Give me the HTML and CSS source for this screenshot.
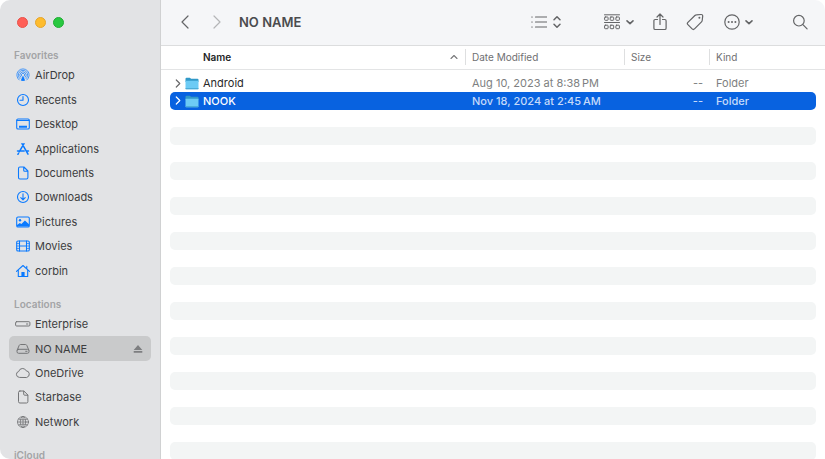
FILE: index.html
```html
<!DOCTYPE html>
<html lang="en">
<head>
<meta charset="utf-8">
<title>NO NAME</title>
<link rel="stylesheet" href="styles.css">
</head>
<body>
<svg class="defs" aria-hidden="true">
  <symbol id="doc" viewBox="0 0 16 16"><path d="M4.900 2h4l4 4v6.600a1.400 1.400 0 0 1-1.400 1.400H4.900a1.400 1.400 0 0 1-1.400-1.400V3.400A1.400 1.400 0 0 1 4.900 2zM8.700 2.200v3a1 1 0 0 0 1 1h3"/></symbol>
  <symbol id="down" viewBox="0 0 10 10"><path d="M2 3.900 5 6.700l3-2.800"/></symbol>
  <symbol id="folder" viewBox="0 0 14 13">
    <path fill="#3199c8" d="M.500 1.700A1 1 0 0 1 1.500.700h3.300l1.300 1.100h6.400a1 1 0 0 1 1 1V5H.500z"/>
    <path fill="#6ccbf5" d="M.500 3.700h13v7.600a.900.900 0 0 1-.900.900H1.400a.900.900 0 0 1-.900-.900z"/>
    <path fill="#4badd9" d="M.500 11.100h13v.300a.900.900 0 0 1-.900.900H1.400a.900.900 0 0 1-.900-.900z"/>
  </symbol>
</svg>
<div class="window">
  <aside class="sidebar">
    <div class="lights">
      <button class="light close" aria-label="Close"></button>
      <button class="light minimize" aria-label="Minimize"></button>
      <button class="light zoom" aria-label="Zoom"></button>
    </div>
    <nav>
      <h2>Favorites</h2>
      <ul class="places favorites">
        <li><a href="#"><svg class="icon" viewBox="0 0 16 16"><g stroke-width=".7"><path d="M4.200 13a6.200 6.200 0 1 1 7.600 0"/><path d="M4.900 11.600a4.700 4.700 0 1 1 6.200 0"/><path d="M5.700 10.300a3.200 3.200 0 1 1 4.600 0"/><path d="M6.700 9.100a1.700 1.700 0 1 1 2.600 0"/></g><path class="solid" d="m8 8.500 2.200 5.100a6 6 0 0 1-4.400 0z"/></svg>AirDrop</a></li>
        <li><a href="#"><svg class="icon" viewBox="0 0 16 16"><circle cx="8" cy="8" r="5.500"/><path d="M8 4.500V8.200H5"/></svg>Recents</a></li>
        <li><a href="#"><svg class="icon" viewBox="0 0 16 16"><rect x="1.700" y="3" width="12.600" height="10" rx="1.300"/><path d="M2 4.500h12"/><path class="solid" d="M4 9.700h8v2H4z"/></svg>Desktop</a></li>
        <li><a href="#"><svg class="icon" viewBox="0 0 16 16"><g stroke-width="1.500"><path d="m9 2.700-4.800 8.200M7 2.700l6 10.500M2.500 10.100h6.700M11.400 10.100h2.100M3.500 12.300l-.600 1"/></g></svg>Applications</a></li>
        <li><a href="#"><svg class="icon"><use href="#doc"/></svg>Documents</a></li>
        <li><a href="#"><svg class="icon" viewBox="0 0 16 16"><circle cx="8" cy="8" r="5.500"/><path d="M8 4.800v6M5.800 8.700 8 10.900l2.200-2.200"/></svg>Downloads</a></li>
        <li><a href="#"><svg class="icon" viewBox="0 0 16 16"><rect x="1.700" y="3" width="12.600" height="10" rx="1.300"/><circle class="solid" cx="5" cy="6.200" r="1.200"/><path class="solid" d="M2 12.500v-1.600l2.800-2 1.600 1.200 3.500-3.600 4.100 3.800v2.200z"/></svg>Pictures</a></li>
        <li><a href="#"><svg class="icon" viewBox="0 0 16 16"><rect x="1.700" y="3" width="12.600" height="10" rx="1.300"/><path d="M4.500 3v10M11.500 3v10M4.500 8h7"/><g stroke-width=".7"><path d="M2 5.500h2.500M2 8h2.500M2 10.500h2.500M11.500 5.500H14M11.500 8H14M11.500 10.500H14"/></g></svg>Movies</a></li>
        <li><a href="#"><svg class="icon" viewBox="0 0 16 16"><path d="M1.500 8.300 8 2.500l6.500 5.800M3.300 7v6.500h9.400V7M11.800 5.500V3.200"/><path class="solid" d="M6.400 9h3.200v4.800H6.400z"/></svg>corbin</a></li>
      </ul>
      <h2>Locations</h2>
      <ul class="places locations">
        <li><a href="#"><svg class="icon" viewBox="0 0 16 16"><rect x=".6" y="5.700" width="14.300" height="4.300" rx="1"/><path d="M11.500 8h1.300"/></svg>Enterprise</a></li>
        <li class="current"><a href="#"><svg class="icon" viewBox="0 0 16 16"><path d="m2.200 9 2-4.600c.300-.600.700-.900 1.300-.900h5c.600 0 1 .300 1.300.900l2 4.600"/><rect x="2" y="8.300" width="12" height="4" rx="1.600"/><path d="M10.700 10.300h1.300"/></svg>NO NAME</a><button class="eject" aria-label="Eject"><svg viewBox="0 0 10 10"><path d="M5 1 9.300 6H.700zM.700 7.100h8.600v1.700H.700z"/></svg></button></li>
        <li><a href="#"><svg class="icon" viewBox="0 0 16 16"><path d="M4.200 12.400a3 3 0 0 1-.500-5.900 4 4 0 0 1 7.500-.700 3.400 3.400 0 0 1 .800 6.600z"/></svg>OneDrive</a></li>
        <li><a href="#"><svg class="icon"><use href="#doc"/></svg>Starbase</a></li>
        <li><a href="#"><svg class="icon" viewBox="0 0 16 16"><g stroke-width=".8"><circle cx="8" cy="8" r="5.500"/><ellipse cx="8" cy="8" rx="2.700" ry="5.500"/><path d="M8 2.500v11M2.500 8h11M3.500 5c2.500 1.200 6.500 1.200 9 0M3.500 11c2.500-1.200 6.500-1.200 9 0"/></g></svg>Network</a></li>
      </ul>
      <h2>iCloud</h2>
    </nav>
  </aside>
  <main class="content">
    <header class="toolbar">
      <button aria-label="Back"><svg class="i16" viewBox="0 0 16 16"><path d="M11 2 5 8l6 6"/></svg></button>
      <button class="forward" aria-label="Forward" disabled><svg class="i16" viewBox="0 0 16 16"><path d="m5 2 6 6-6 6"/></svg></button>
      <h1>NO NAME</h1>
      <div class="tools">
        <button class="view" aria-label="View as list"><svg class="i16" viewBox="0 0 16 16"><path d="M4.500 3h11M4.500 8h11M4.500 13h11M.800 3h.400M.800 8h.400M.800 13h.400"/></svg><svg class="i10" viewBox="0 0 10 14"><g stroke-width="1.500"><path d="m2 4.700 3-3 3 3M2 9.300l3 3 3-3"/></g></svg></button>
        <button class="group" aria-label="Group items"><svg class="i16" viewBox="0 0 16 16"><g stroke-width="1"><path d="M.500.800h15M.500 8.500h15"/><rect x=".6" y="3" width="3.500" height="3.300" rx=".7"/><rect x="6.200" y="3" width="3.500" height="3.300" rx=".7"/><rect x="11.900" y="3" width="3.500" height="3.300" rx=".7"/><rect x=".6" y="11.200" width="3.500" height="3.500" rx=".7"/><rect x="6.200" y="11.200" width="3.500" height="3.500" rx=".7"/><rect x="11.900" y="11.200" width="3.500" height="3.500" rx=".7"/></g></svg><svg class="i10 bold"><use href="#down"/></svg></button>
        <button aria-label="Share"><svg class="i18" viewBox="0 0 18 18"><path d="M6.500 6.500H4.200a1.300 1.300 0 0 0-1.300 1.300v7.400a1.300 1.300 0 0 0 1.300 1.300h9.600a1.300 1.300 0 0 0 1.300-1.300V7.800a1.300 1.300 0 0 0-1.300-1.300h-2.300M9 11.500V1.200M6 4l3-3 3 3"/></svg></button>
        <button class="tag" aria-label="Edit tags"><svg class="i18" viewBox="0 0 18 18"><path d="M10.300 1.900 15 1.500c1.100-.100 1.800.600 1.700 1.600l-.500 4.400c-.100.600-.300 1-.700 1.400l-7 7c-.800.800-1.600.800-2.400 0L1.900 11.700c-.800-.800-.800-1.600 0-2.400l7-6.800c.400-.400.800-.600 1.400-.600z"/><circle class="solid" cx="13.400" cy="4.800" r="1"/></svg></button>
        <button class="more" aria-label="More actions"><svg class="i16" viewBox="0 0 16 16"><circle cx="8" cy="8" r="7.200"/><g class="solid"><circle cx="4.600" cy="8" r="1"/><circle cx="8" cy="8" r="1"/><circle cx="11.400" cy="8" r="1"/></g></svg><svg class="i10 bold"><use href="#down"/></svg></button>
        <button class="search" aria-label="Search"><svg class="i16" viewBox="0 0 16 16"><circle cx="6.900" cy="6.700" r="5.300"/><path d="m10.900 10.700 4.200 4.200"/></svg></button>
      </div>
    </header>
    <div class="listing">
      <table>
        <colgroup><col><col class="c-date"><col class="c-size"><col class="c-kind"></colgroup>
        <thead><tr>
          <th class="sorted" scope="col" aria-sort="ascending"><div>Name<svg class="i10" viewBox="0 0 10 10"><path d="m2 6.500 3-3 3 3"/></svg></div></th>
          <th scope="col"><div>Date Modified</div></th>
          <th scope="col"><div>Size</div></th>
          <th scope="col"><div>Kind</div></th>
        </tr></thead>
        <tbody>
          <tr class="spacer"><td colspan="4"></td></tr>
          <tr>
            <td><div class="name"><svg class="i10" viewBox="0 0 10 10"><path d="m3.300 1 3.500 3.500L3.300 8"/></svg><svg class="folder"><use href="#folder"/></svg>Android</div></td>
            <td>Aug 10, 2023 at 8:38&#8239;PM</td><td class="size">--</td><td>Folder</td>
          </tr>
          <tr class="selected">
            <td><div class="name"><svg class="i10" viewBox="0 0 10 10"><path d="m3.300 1 3.500 3.500L3.300 8"/></svg><svg class="folder"><use href="#folder"/></svg>NOOK</div></td>
            <td>Nov 18, 2024 at 2:45&#8239;AM</td><td class="size">--</td><td>Folder</td>
          </tr>
        </tbody>
      </table>
      <div class="stripes" aria-hidden="true"><i></i><i></i><i></i><i></i><i></i><i></i><i></i><i></i><i></i><i></i></div>
    </div>
  </main>
</div>
</body>
</html>
```
FILE: styles.css
```css
* { box-sizing: border-box; }

body {
  margin: 0;
  background: #fff;
  color: #3c3d3e;
  font: 11px/14px Inter, "Liberation Sans", sans-serif;
}

.defs { position: absolute; width: 0; height: 0; }

svg {
  display: block;
  flex: none;
  fill: none;
  stroke: currentColor;
  stroke-width: 1.1;
  stroke-linecap: round;
  stroke-linejoin: round;
}

.solid { fill: currentColor; stroke: none; }
.i10 { width: 10px; height: 10px; }
.i16 { width: 16px; height: 16px; }
.i18 { width: 18px; height: 18px; }

button {
  display: flex;
  align-items: center;
  padding: 0;
  border: 0;
  background: none;
  color: inherit;
}

.window {
  display: grid;
  grid-template-columns: 161px 1fr;
  height: 100vh;
  overflow: hidden;
  border-radius: 10px;
}

/* Sidebar */
.sidebar {
  overflow: hidden;
  padding-top: 17px;
  border-right: 1px solid #d0d1d2;
  background: #e2e3e5;
}

.lights { display: flex; gap: 7px; margin-bottom: 20px; padding-left: 17px; }
.light { width: 11px; height: 11px; border-radius: 50%; }
.close { background: #ff5f57; border: 1px solid #e9524a; }
.minimize { background: #febc2e; border: 1px solid #e5a52a; }
.zoom { background: #28c840; border: 1px solid #20ae34; }

h2 {
  margin: 0 0 1px 14px;
  color: #a3a4a6;
  font-size: 10px;
  font-weight: 600;
  line-height: 14px;
}

.places {
  display: grid;
  grid-auto-rows: 1fr;
  margin: 0 9px 14px;
  padding: 0;
  list-style: none;
}

.favorites { height: 220px; }
.locations { height: 122px; }
.places li { display: flex; align-items: center; padding: 0 8px 0 6px; border-radius: 5px; }
.places a { display: flex; flex: 1; align-items: center; gap: 4px; color: #3c3d3e; text-decoration: none; }
.icon { width: 16px; height: 16px; }
.favorites .icon { color: #0a7aff; }
.locations .icon { color: #747577; stroke-width: 1; }
.places .current { background: #c9cacb; }
.eject svg { width: 10px; height: 10px; fill: #7d7e80; stroke: none; }

/* Toolbar */
.content { display: flex; flex-direction: column; min-width: 0; overflow: hidden; }

.toolbar {
  display: flex;
  flex: none;
  align-items: center;
  height: 46px;
  padding: 0 17px 1px 16px;
  border-bottom: 1px solid #dcddde;
  background: #f5f6f8;
  color: #646567;
}

.toolbar svg { stroke-width: 1.2; }
.toolbar .bold { stroke-width: 1.6; }
.forward { margin-left: 16px; color: #b4b5b7; }
h1 { margin: 0 0 0 14px; color: #4b4c4e; font-size: 13px; font-weight: 600; line-height: 18px; }
.tools { display: flex; align-items: center; margin-left: auto; }
.view { gap: 5px; margin-right: 42px; }
.view .i10 { height: 14px; }
.group { gap: 5px; margin-right: 16px; }
.tag { margin-left: 17px; }
.more { gap: 4px; margin: 0 38px 0 20px; }

/* File list */
.listing {
  flex: 1;
  overflow: hidden;
  padding: 0 9px;
  background: linear-gradient(#e3e4e5, #e3e4e5) 0 23px / 100% 1px no-repeat #fff;
}

table { width: 100%; border-collapse: separate; border-spacing: 0; table-layout: fixed; }
.c-date { width: 159px; }
.c-size { width: 85px; }
.c-kind { width: 107px; }
th, td { padding: 0; text-align: left; white-space: nowrap; }
th { height: 22px; color: #6f7072; font-size: 10px; font-weight: 400; }
th div { display: flex; align-items: center; justify-content: space-between; height: 16px; padding-left: 6px; border-left: 1px solid #dedfe0; }
.sorted { color: #242526; font-weight: 600; }
.sorted div { padding: 0 6px 0 33px; border: 0; }
.sorted svg { color: #77787a; }

.spacer td { height: 7px; }
td { height: 17px; padding-left: 7px; color: #7e7f81; line-height: 17px; }
td:first-child { padding-left: 3px; color: #29292a; }
.spacer td:first-child { padding: 0; line-height: 0; }
.name { display: flex; align-items: center; }
.name .i10 { color: #69696b; stroke-width: 1.2; }
.folder { width: 14px; height: 13px; margin: 0 4px 0 2px; stroke: none; }
.size { padding: 0 6px 0 0; text-align: right; }

.selected td { height: 18px; background: #0862e0; color: #c5dafa; font-weight: 500; }
.selected td:first-child { border-radius: 5px 0 0 5px; color: #fff; }
.selected td:last-child { border-radius: 0 5px 5px 0; }
.selected .i10 { color: #fff; }

.stripes { display: grid; gap: 17px; padding-top: 17px; }
.stripes i { height: 18px; border-radius: 5px; background: #f3f5f5; }
```
